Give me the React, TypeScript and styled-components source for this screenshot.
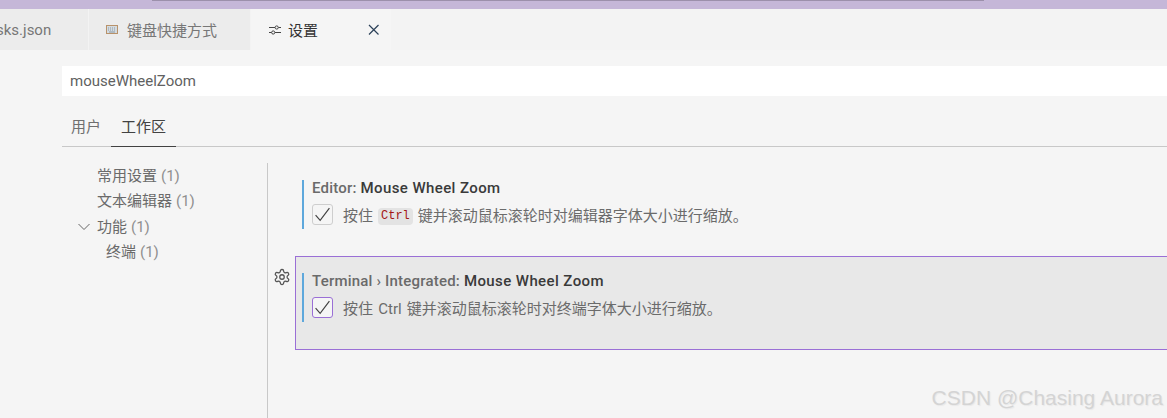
import React from "react";
import styled, { createGlobalStyle } from "styled-components";

const Global = createGlobalStyle`
  html, body { margin: 0; padding: 0; background: #f5f5f5; }
  body { font-family: Roboto, "Noto Sans CJK SC", sans-serif; }
`;
const Page = styled.div`
  width: 1167px; height: 418px; overflow: hidden; position: relative;
  display: flex; flex-direction: column; background: #f5f5f5;
`;
const TopStrip = styled.div`
  height: 9px; flex: none; background: #c5b7d8; padding-left: 152px; box-sizing: border-box;
`;
const TopShade = styled.div`
  width: 832px; height: 1px; background: #9c90ab;
`;
const TabBar = styled.div`
  height: 41px; flex: none; background: #f3f3f3; display: flex;
`;
const Tab = styled.div<{ $active?: boolean; $w: number }>`
  width: ${p => p.$w}px; box-sizing: border-box; display: flex; align-items: center;
  background: ${p => (p.$active ? "#f5f5f5" : "#ececec")};
  color: ${p => (p.$active ? "#333" : "#777")};
  font-size: 15px; white-space: nowrap; overflow: hidden;
  margin-right: ${p => (p.$active ? 0 : 1)}px;
`;
const ClippedLabel = styled.span`
  margin-left: -4px;
`;
const KeyTab = styled(Tab)`
  padding-left: 17px; gap: 9px;
`;
const ActiveTab = styled(Tab)`
  padding-left: 18px; gap: 7px;
`;
const Close = styled.span`
  margin-left: 43px; display: flex;
`;
const Body = styled.div`
  flex: 1; padding: 16px 0 0 62px; display: flex; flex-direction: column; min-height: 0;
`;
const Search = styled.div`
  height: 30px; background: #fff; padding-left: 8px; display: flex; align-items: center;
  font-size: 15px; color: #616161; flex: none;
`;
const ScopeTabs = styled.div`
  height: 51px; flex: none; box-sizing: border-box; border-bottom: 1px solid #c8c8c8;
  display: flex; align-items: flex-end; margin-bottom: 16px;
`;
const Scope = styled.div<{ $active?: boolean }>`
  height: 36px; box-sizing: border-box; margin-bottom: -1px; font-size: 15px;
  color: ${p => (p.$active ? "#424242" : "#6f6f6f")};
  padding: 6px 10px 0; line-height: 20px;
  border-bottom: ${p => (p.$active ? "1px solid #424242" : "1px solid transparent")};
`;
const FirstScope = styled(Scope)`
  padding-left: 9px; width: 49px; box-sizing: border-box;
`;
const Columns = styled.div`
  flex: 1; display: flex; min-height: 0;
`;
const Tree = styled.div`
  width: 206px; flex: none; box-sizing: border-box; border-right: 1px solid #c8c8c8;
`;
const TreeRow = styled.div<{ $indent: number }>`
  height: 25.5px; display: flex; align-items: center; padding-left: ${p => p.$indent}px;
  font-size: 15px; line-height: 20px; color: #6a6a6a; white-space: nowrap; position: relative;
`;
const Count = styled.span`
  color: #8f8f8f; margin-left: 4px;
`;
const Chevron = styled.svg`
  position: absolute; left: 15px; top: 8px;
`;
const Settings = styled.div`
  flex: 1; padding-top: 8px; min-width: 0;
`;
const Item = styled.div<{ $focus?: boolean }>`
  margin-left: 27px; box-sizing: border-box; position: relative;
  height: ${p => (p.$focus ? 94 : 85)}px;
  padding: ${p => (p.$focus ? "16px 0 0 6px" : "9px 0 0 7px")};
  ${p => p.$focus && "border: 1px solid #9a6fd6; border-right: 0; background: #e8e8e8;"}
`;
const Gear = styled.svg`
  position: absolute; left: -23px; top: 11px;
`;
const Content = styled.div`
  border-left: 2px solid #5ea8dc; padding-left: 8px; height: 49px; box-sizing: border-box;
`;
const Title = styled.div`
  font-size: 15px; line-height: 16px; color: #6a6a6a; font-weight: 500; white-space: nowrap;
  letter-spacing: 0.2px;
`;
const TitleName = styled.span`
  color: #3a3a3a; letter-spacing: 0.4px;
`;
const Row = styled.div`
  display: flex; align-items: center; margin-top: 8px; font-size: 15px; color: #6b6b6b;
  white-space: pre; word-spacing: 1.5px;
`;
const Check = styled.div<{ $focus?: boolean }>`
  width: 21px; height: 21px; box-sizing: border-box; border-radius: 3px; flex: none;
  background: #f5f5f5; display: flex; align-items: center; justify-content: center;
  border: 1px solid ${p => (p.$focus ? "#9a6fd6" : "#cecece")};
  margin-right: 10px;
`;
const Code = styled.code`
  font-family: "Liberation Mono", monospace; font-size: 12px; line-height: 17px; color: #a31515;
  background: #e3e3e3; border-radius: 4px; padding: 0 3px; margin: 3px 5px 0;
`;
const Watermark = styled.div`
  position: absolute; right: 4px; top: 384px; font-family: "Liberation Sans", sans-serif;
  font-size: 21px; color: #d4d4d4; white-space: nowrap; line-height: 28px;
  text-shadow: 1px 1px 1px #e8e8e8;
`;

const CheckMark = () => (
  <svg width="17" height="17" viewBox="0 0 16 16" fill="none" stroke="#424242" strokeWidth="1.1">
    <path d="M1.500 8.500 L5.800 13.500 L14.500 2" />
  </svg>
);

export default function App() {
  return (
    <Page>
      <Global />
      <TopStrip><TopShade /></TopStrip>
      <TabBar>
        <Tab $w={88}><ClippedLabel>sks.json</ClippedLabel></Tab>
        <KeyTab $w={161}>
          <svg width="12" height="10" viewBox="0 0 12 10">
            <rect x="0.5" y="0.5" width="11" height="8" fill="#d4dbe0" stroke="#b8926a" />
            <path d="M2 3h8M2 5h8" stroke="#8a98a4" strokeWidth="1" strokeDasharray="1 1" />
            <path d="M3 7h6" stroke="#8a98a4" />
          </svg>
          键盘快捷方式
        </KeyTab>
        <ActiveTab $active $w={140}>
          <svg width="12" height="12" viewBox="0 0 12 12" fill="none" stroke="#444" strokeWidth="1">
            <path d="M0 3.500h6M9.500 3.500H12M0 8.500h2.500M6 8.500h6" />
            <circle cx="7.700" cy="3.500" r="1.600" />
            <circle cx="4.200" cy="8.500" r="1.600" />
          </svg>
          设置
          <Close>
            <svg width="11" height="11" viewBox="0 0 11 11" stroke="#2c4159" strokeWidth="1.200">
              <path d="M1 1l9.500 9.500M10.500 1L1 10.500" />
            </svg>
          </Close>
        </ActiveTab>
      </TabBar>
      <Body>
        <Search>mouseWheelZoom</Search>
        <ScopeTabs>
          <FirstScope>用户</FirstScope>
          <Scope $active>工作区</Scope>
        </ScopeTabs>
        <Columns>
          <Tree>
            <TreeRow $indent={35}>常用设置<Count>(1)</Count></TreeRow>
            <TreeRow $indent={35}>文本编辑器<Count>(1)</Count></TreeRow>
            <TreeRow $indent={35}>
              <Chevron width="14" height="10" viewBox="0 0 14 10" fill="none" stroke="#666" strokeWidth="1">
                <path d="M1.500 2l5.500 5.500L12.500 2" />
              </Chevron>
              功能<Count>(1)</Count>
            </TreeRow>
            <TreeRow $indent={44}>终端<Count>(1)</Count></TreeRow>
          </Tree>
          <Settings>
            <Item>
              <Content>
                <Title>Editor: <TitleName>Mouse Wheel Zoom</TitleName></Title>
                <Row>
                  <Check><CheckMark /></Check>
                  按住<Code>Ctrl</Code>键并滚动鼠标滚轮时对编辑器字体大小进行缩放。
                </Row>
              </Content>
            </Item>
            <Item $focus>
              <Gear width="18" height="18" viewBox="0 0 24 24" fill="none" stroke="#555" strokeWidth="1.700">
                <path d="M12.200 2h-.400a2 2 0 0 0-2 2v.200a2 2 0 0 1-1 1.700l-.400.300a2 2 0 0 1-2 0l-.200-.100a2 2 0 0 0-2.700.700l-.200.400a2 2 0 0 0 .700 2.700l.200.100a2 2 0 0 1 1 1.700v.600a2 2 0 0 1-1 1.700l-.200.100a2 2 0 0 0-.700 2.700l.200.400a2 2 0 0 0 2.700.700l.200-.100a2 2 0 0 1 2 0l.400.300a2 2 0 0 1 1 1.700v.200a2 2 0 0 0 2 2h.400a2 2 0 0 0 2-2v-.200a2 2 0 0 1 1-1.700l.400-.300a2 2 0 0 1 2 0l.200.100a2 2 0 0 0 2.700-.700l.200-.400a2 2 0 0 0-.700-2.700l-.200-.100a2 2 0 0 1-1-1.700v-.600a2 2 0 0 1 1-1.700l.200-.100a2 2 0 0 0 .700-2.700l-.200-.400a2 2 0 0 0-2.700-.700l-.200.100a2 2 0 0 1-2 0l-.400-.300a2 2 0 0 1-1-1.700V4a2 2 0 0 0-2-2z" />
                <circle cx="12" cy="12" r="3" />
              </Gear>
              <Content>
                <Title>Terminal › Integrated: <TitleName>Mouse Wheel Zoom</TitleName></Title>
                <Row>
                  <Check $focus><CheckMark /></Check>
                  按住 Ctrl 键并滚动鼠标滚轮时对终端字体大小进行缩放。
                </Row>
              </Content>
            </Item>
          </Settings>
        </Columns>
      </Body>
      <Watermark>CSDN @Chasing Aurora</Watermark>
    </Page>
  );
}
